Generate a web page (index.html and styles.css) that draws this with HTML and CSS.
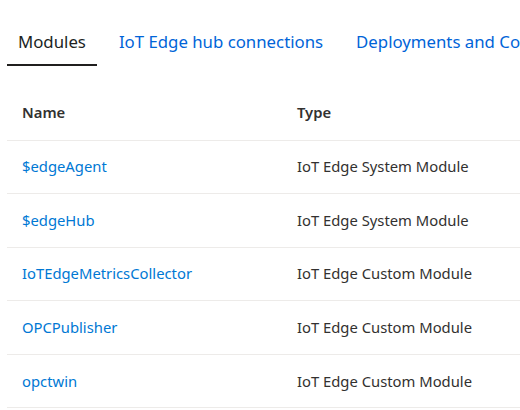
FILE: index.html
```html
<!DOCTYPE html>
<html lang="en">
<head>
<meta charset="UTF-8">
<title>IoT Edge device - Modules</title>
<link rel="stylesheet" href="styles.css">
</head>
<body>
<div class="page">
    <div class="tabs">
        <a class="tab active">Modules</a>
        <a class="tab">IoT Edge hub connections</a>
        <a class="tab">Deployments and Configurations</a>
    </div>

    <table class="modules">
        <thead>
            <tr>
                <th class="col-name">Name</th>
                <th>Type</th>
            </tr>
        </thead>
        <tbody>
            <tr>
                <td><a class="link">$edgeAgent</a></td>
                <td>IoT Edge System Module</td>
            </tr>
            <tr>
                <td><a class="link">$edgeHub</a></td>
                <td>IoT Edge System Module</td>
            </tr>
            <tr>
                <td><a class="link">IoTEdgeMetricsCollector</a></td>
                <td>IoT Edge Custom Module</td>
            </tr>
            <tr>
                <td><a class="link">OPCPublisher</a></td>
                <td>IoT Edge Custom Module</td>
            </tr>
            <tr>
                <td><a class="link">opctwin</a></td>
                <td>IoT Edge Custom Module</td>
            </tr>
        </tbody>
    </table>
</div>
</body>
</html>
```

FILE: styles.css
```css
body {
  margin: 0;
  font-family: 'Segoe UI', 'Noto Sans', 'Open Sans', sans-serif;
  background-color: #ffffff;
  color: #323130;
  overflow: hidden;
}

.page {
  width: 600px;
  padding: 0 0 0 7px;
}

.tabs {
  display: flex;
  gap: 11px;
  padding-top: 24px;
  white-space: nowrap;
}

.tab {
  padding: 0 11px;
  height: 42px;
  line-height: 35px;
  font-size: 16.8px;
  color: #0064d8;
  border-bottom: 2px solid transparent;
  box-sizing: border-box;
}

.tab.active {
  color: #201f1e;
  border-bottom-color: #201f1e;
}

.modules {
  border-collapse: collapse;
  width: 100%;
  margin-top: 19px;
  font-size: 14.8px;
}

.modules th {
  text-align: left;
  font-weight: 600;
  height: 55px;
  padding: 0 15px;
  border-bottom: 1px solid #edebe9;
  box-sizing: border-box;
}

.modules th.col-name {
  width: 275px;
}

.modules td {
  height: 53.6px;
  padding: 0 15px 1px;
  border-bottom: 1px solid #edebe9;
  box-sizing: border-box;
}

.link {
  color: #0078d4;
  cursor: pointer;
}
```
